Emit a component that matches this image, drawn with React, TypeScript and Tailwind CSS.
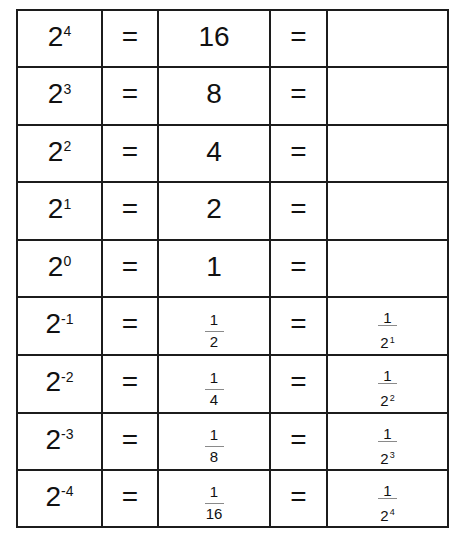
const rows = [
  { exp: "4", value: "16" },
  { exp: "3", value: "8" },
  { exp: "2", value: "4" },
  { exp: "1", value: "2" },
  { exp: "0", value: "1" },
  { exp: "-1", den: "2", pow: "1" },
  { exp: "-2", den: "4", pow: "2" },
  { exp: "-3", den: "8", pow: "3" },
  { exp: "-4", den: "16", pow: "4" },
];

const Frac = ({ den, pow }: { den: string; pow?: string }) => (
  <div className="mt-2 flex flex-col items-center text-[15px] leading-none">
    <span className={pow ? "" : "pb-1"}>1</span>
    <span className="block h-px w-[19px] bg-[#8a8a8a]" />
    <span className={pow ? "pt-[9px]" : "pt-[2px]"}>
      {den}
      {pow && <sup className="ml-px text-[9px] top-[-0.6em]">{pow}</sup>}
    </span>
  </div>
);

const cell = "flex items-center justify-center border-l-2 border-t-2 border-[#1c1c1c]";

export default function App() {
  return (
    <div className="min-h-[537px] bg-white pl-4 pt-[9px] font-['Liberation_Sans',Arial,sans-serif] text-[#111]">
      <div className="grid w-[433px] grid-cols-[85px_56px_112px_57px_121px] grid-rows-[57px_58px_57px_58px_57px_58px_58px_57px_57px] border-b-2 border-r-2 border-[#1c1c1c]">
        {rows.map((r) => (
          <>
            <div key={r.exp + "a"} className={cell + " pb-1 text-[28px]"}>
              <span>
                2<sup className="text-[14px] top-[-0.65em]">{r.exp}</sup>
              </span>
            </div>
            <div key={r.exp + "b"} className={cell + " pb-1 text-[28px]"}>=</div>
            <div key={r.exp + "c"} className={cell + (r.value ? " pb-1 text-[28px]" : "")}>
              {r.value ?? <Frac den={r.den!} />}
            </div>
            <div key={r.exp + "d"} className={cell + " pb-1 text-[28px]"}>=</div>
            <div key={r.exp + "e"} className={cell}>
              {r.pow && <Frac den="2" pow={r.pow} />}
            </div>
          </>
        ))}
      </div>
    </div>
  );
}
